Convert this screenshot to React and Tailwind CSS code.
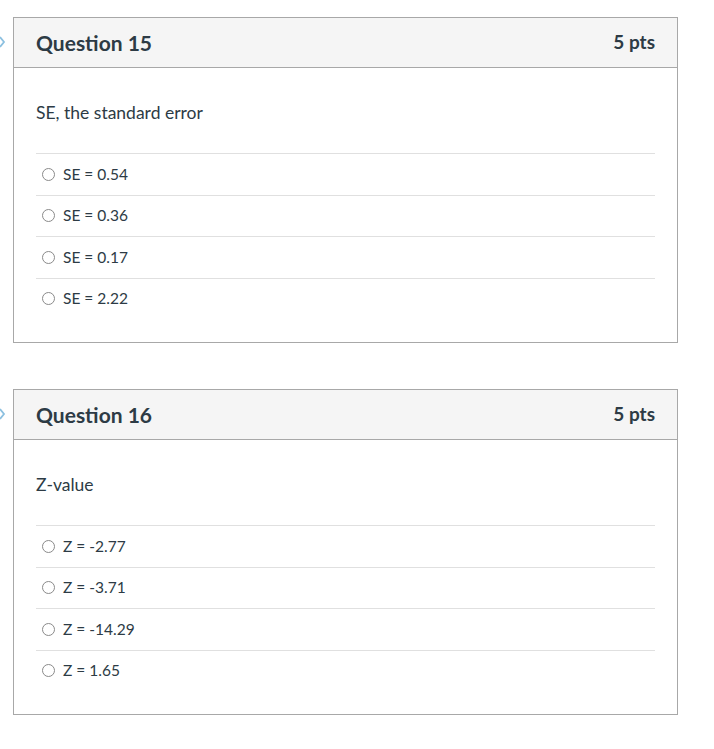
import React from 'react';

const questions = [
  {
    id: 15,
    points: 5,
    text: 'SE, the standard error',
    answers: ['SE = 0.54', 'SE = 0.36', 'SE = 0.17', 'SE = 2.22'],
  },
  {
    id: 16,
    points: 5,
    text: 'Z-value',
    answers: ['Z = -2.77', 'Z = -3.71', 'Z = -14.29', 'Z = 1.65'],
  },
];

function Question({ q }) {
  return (
    <div className="relative">
      {/* flag marker, mostly clipped off the left edge */}
      <svg
        className="absolute left-[-24px] top-[19px]"
        width="17"
        height="12"
        viewBox="0 0 17 12"
      >
        <path d="M11 1 L15 6 L11 11" fill="none" stroke="#8cc0e0" strokeWidth="1.8" />
      </svg>
      <div className="w-[665px] border border-[#a8a8a8] bg-white">
        <div className="flex h-[50px] items-center justify-between border-b border-[#a8a8a8] bg-[#f5f5f5] px-[22px]">
          <h2 className="text-[21px] font-bold text-[#2d3b45]">Question {q.id}</h2>
          <span className="text-[19px] font-bold text-[#2d3b45]">{q.points} pts</span>
        </div>
        <div className="px-[22px] pt-[33px] pb-[23px]">
          <p className="text-[17.5px] leading-6 text-[#2d3b45]">{q.text}</p>
          <div className="mt-[28px]">
            {q.answers.map((a) => (
              <label
                key={a}
                className="flex h-[41.5px] items-center border-t border-[#e0e0e0] pl-[6px] text-[15.5px] text-[#2d3b45]"
              >
                <span className="h-[13px] w-[13px] shrink-0 rounded-full border border-[#8a8a8a] bg-white" />
                <span className="ml-[8px]">{a}</span>
              </label>
            ))}
          </div>
        </div>
      </div>
    </div>
  );
}

export default function App() {
  return (
    <div
      className="min-h-screen overflow-hidden bg-white pt-[17px] pl-[13px]"
      style={{ fontFamily: 'Lato, "Noto Sans", sans-serif' }}
    >
      <div className="flex flex-col gap-[46px]">
        {questions.map((q) => (
          <Question key={q.id} q={q} />
        ))}
      </div>
    </div>
  );
}
